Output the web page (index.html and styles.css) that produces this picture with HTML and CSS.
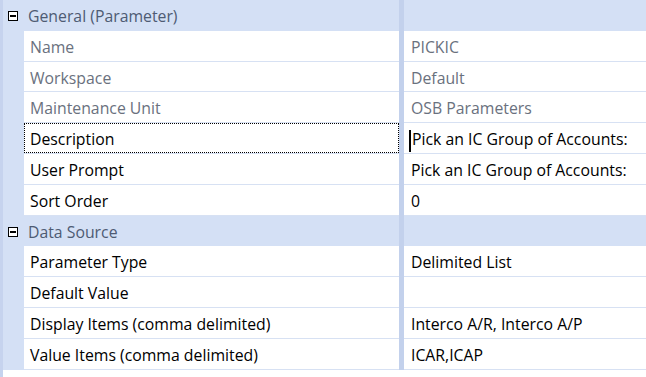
FILE: index.html
```html
<!DOCTYPE html>
<html>
<head>
    <link rel="stylesheet" href="styles.css">
</head>
<body>
    <div class="property-grid">
        <div class="category">
            <div class="gutter"><span class="expander"></span></div>
            <div class="category-name">General (Parameter)</div>
            <div class="splitter"></div>
            <div class="category-fill"></div>
        </div>
        <div class="prop readonly">
            <div class="gutter"></div>
            <div class="label">Name</div>
            <div class="splitter"></div>
            <div class="value">PICKIC</div>
        </div>
        <div class="prop readonly">
            <div class="gutter"></div>
            <div class="label">Workspace</div>
            <div class="splitter"></div>
            <div class="value">Default</div>
        </div>
        <div class="prop readonly">
            <div class="gutter"></div>
            <div class="label">Maintenance Unit</div>
            <div class="splitter"></div>
            <div class="value">OSB Parameters</div>
        </div>
        <div class="prop selected">
            <div class="gutter"></div>
            <div class="label"><span class="focus-box">Description</span></div>
            <div class="splitter"></div>
            <div class="value"><span class="caret"></span>Pick an IC Group of Accounts:</div>
        </div>
        <div class="prop">
            <div class="gutter"></div>
            <div class="label">User Prompt</div>
            <div class="splitter"></div>
            <div class="value">Pick an IC Group of Accounts:</div>
        </div>
        <div class="prop">
            <div class="gutter"></div>
            <div class="label">Sort Order</div>
            <div class="splitter"></div>
            <div class="value">0</div>
        </div>
        <div class="category">
            <div class="gutter"><span class="expander"></span></div>
            <div class="category-name">Data Source</div>
            <div class="splitter"></div>
            <div class="category-fill"></div>
        </div>
        <div class="prop">
            <div class="gutter"></div>
            <div class="label">Parameter Type</div>
            <div class="splitter"></div>
            <div class="value">Delimited List</div>
        </div>
        <div class="prop">
            <div class="gutter"></div>
            <div class="label">Default Value</div>
            <div class="splitter"></div>
            <div class="value"></div>
        </div>
        <div class="prop">
            <div class="gutter"></div>
            <div class="label">Display Items (comma delimited)</div>
            <div class="splitter"></div>
            <div class="value">Interco A/R, Interco A/P</div>
        </div>
        <div class="prop">
            <div class="gutter"></div>
            <div class="label">Value Items (comma delimited)</div>
            <div class="splitter"></div>
            <div class="value">ICAR,ICAP</div>
        </div>
    </div>
</body>
</html>
```

FILE: styles.css
```css
body {
    margin: 0;
    height: 377px;
    overflow: hidden;
    background: #fff;
    font-family: "Open Sans", "Noto Sans", sans-serif;
    font-size: 15.8px;
}

.property-grid {
    border-left: 3px solid #c6d3ee;
    min-height: 377px;
}

.category,
.prop {
    display: flex;
    height: 30.8px;
}

.gutter {
    flex: 0 0 21px;
    background: #d4e0f5;
    position: relative;
}

.expander {
    position: absolute;
    left: 5px;
    top: 11px;
    width: 8px;
    height: 8px;
    border: 1px solid #000;
    background: #fff;
}

.expander::after {
    content: "";
    position: absolute;
    left: 1px;
    right: 1px;
    top: 3px;
    height: 2px;
    background: #000;
}

.category-name {
    flex: 0 0 375px;
    background: #d4e0f5;
    color: #4e5b73;
    padding: 1px 0 0 4px;
    box-sizing: border-box;
    line-height: 30px;
}

.category-fill {
    flex: 1;
    background: #d4e0f5;
}

.splitter {
    flex: 0 0 5px;
    background: #c3d1ec;
}

.label,
.value {
    box-sizing: border-box;
    border-bottom: 1px solid #d7e1f3;
    padding-top: 3px;
    line-height: 27px;
    color: #000;
    white-space: nowrap;
    overflow: hidden;
}

.label {
    flex: 0 0 375px;
    padding-left: 6px;
}

.value {
    flex: 1;
    padding-left: 7px;
}

.readonly .label,
.readonly .value {
    color: #6a717e;
}

.selected .label {
    padding: 0;
    display: flex;
}

.focus-box {
    flex: 1;
    border: 1px dotted #000;
    padding: 3px 0 0 5px;
    line-height: 25px;
}

.caret {
    display: inline-block;
    width: 2px;
    height: 22px;
    background: #000;
    vertical-align: middle;
    margin: 0 1px 0 -2px;
}
```
